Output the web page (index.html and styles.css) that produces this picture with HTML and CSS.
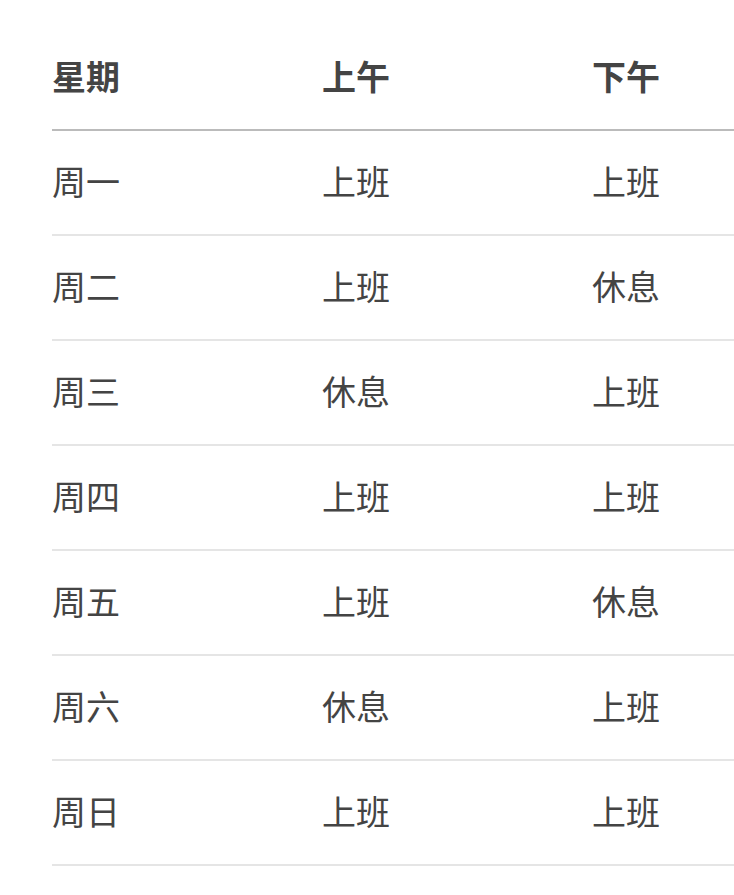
FILE: index.html
```html
<!DOCTYPE html>
<html lang="zh">
<head>
<meta charset="utf-8">
<link rel="stylesheet" href="styles.css">
</head>
<body>
<div class="wrap">
<table class="schedule">
<colgroup><col class="c1"><col class="c2"><col class="c3"></colgroup>
<thead>
<tr><th>星期</th><th>上午</th><th>下午</th></tr>
</thead>
<tbody>
<tr><td>周一</td><td>上班</td><td>上班</td></tr>
<tr><td>周二</td><td>上班</td><td>休息</td></tr>
<tr><td>周三</td><td>休息</td><td>上班</td></tr>
<tr><td>周四</td><td>上班</td><td>上班</td></tr>
<tr><td>周五</td><td>上班</td><td>休息</td></tr>
<tr><td>周六</td><td>休息</td><td>上班</td></tr>
<tr><td>周日</td><td>上班</td><td>上班</td></tr>
</tbody>
</table>
</div>
</body>
</html>
```
FILE: styles.css
```css
html, body {
  margin: 0;
  padding: 0;
  background: #fff;
}
.wrap {
  padding: 26px 0 0 52px;
}
.schedule {
  border-collapse: collapse;
  width: 682px;
  table-layout: fixed;
  font-family: "Noto Sans CJK SC", "Noto Sans", sans-serif;
  font-size: 34px;
  color: #444;
}
.c1, .c2 { width: 270px; }
.c3 { width: 142px; }
.schedule th,
.schedule td {
  text-align: left;
  padding: 24px 0 28px;
  line-height: 51px;
  white-space: nowrap;
}
.schedule th {
  font-weight: 700;
  padding: 24px 0 28px;
  border-bottom: 2px solid #bbbbbb;
}
.schedule td {
  border-bottom: 2px solid #e5e5e5;
}
```
